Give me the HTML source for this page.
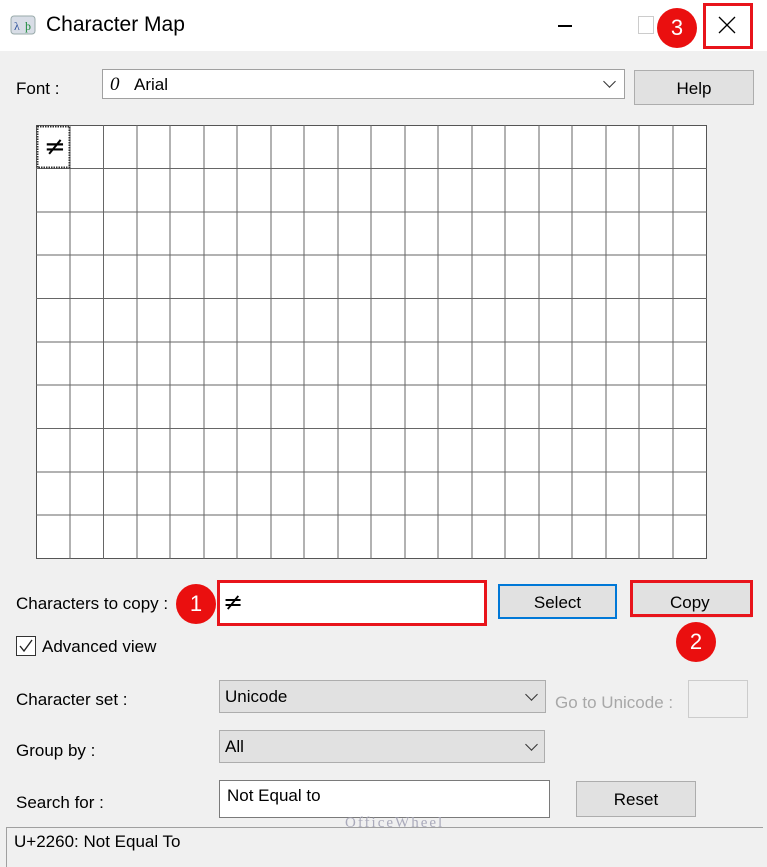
<!DOCTYPE html>
<html><head><style>
body{margin:0;width:767px;height:865px;background:#f0f0f0;font-family:"Liberation Sans",sans-serif;position:relative;overflow:hidden;color:#000}
.a{position:absolute}
.t{font-size:17px}
.btn{position:absolute;background:#e1e1e1;border:1px solid #adadad;box-sizing:border-box;text-align:center;font-size:17px}
.red{position:absolute;border:3px solid #e8141b;box-sizing:border-box}
.circ{position:absolute;width:40px;height:40px;border-radius:50%;background:#ea0f0f;color:#fff;font-size:22px;text-align:center;line-height:40px}
.chev{position:absolute;width:8px;height:8px;border-right:1.3px solid #333;border-bottom:1.3px solid #333;transform:rotate(45deg)}
</style></head><body>
<div class="a" style="left:0;top:0;width:767px;height:51px;background:#fff"></div>
<svg class="a" style="left:10px;top:14px" width="28" height="22"><rect x="1" y="2" width="24" height="18" rx="3" fill="#d8dde6" stroke="#9aa"/><text x="4" y="16" font-size="12" fill="#2a4f9a" font-family="Liberation Serif">λ</text><text x="15" y="16" font-size="12" fill="#1c8a3a" font-family="Liberation Serif">þ</text></svg>
<div class="a" style="left:46px;top:13px;font-size:21px">Character Map</div>
<div class="a" style="left:558px;top:25px;width:14px;height:1.5px;background:#000"></div>
<div class="a" style="left:638px;top:16px;width:14px;height:16px;border:1px solid #ccc"></div>
<div class="circ" style="left:657px;top:8px">3</div>
<div class="red" style="left:703px;top:3px;width:50px;height:46px"></div>
<svg class="a" style="left:717px;top:15px" width="20" height="20"><path d="M2 2L18 18M18 2L2 18" stroke="#000" stroke-width="1.3"/></svg>

<div class="a t" style="left:16px;top:79px">Font :</div>
<div class="a" style="left:102px;top:69px;width:523px;height:30px;background:#fff;border:1px solid #a0a0a0;box-sizing:border-box"></div>
<div class="a" style="left:110px;top:74px;font-family:'Liberation Serif';font-style:italic;font-size:19px">0</div>
<div class="a t" style="left:134px;top:75px">Arial</div>
<div class="chev" style="left:605px;top:77px"></div>
<div class="btn" style="left:634px;top:70px;width:120px;height:35px;line-height:35px">Help</div>

<svg class="a" style="left:36px;top:125px" width="671" height="434">
<rect x="0.5" y="0.5" width="670" height="433" fill="#fff" stroke="#555"/>
<g stroke="#666" stroke-width="1">
<path d="M34 0V434M67.5 0V434M101 0V434M134 0V434M168 0V434M201 0V434M235 0V434M268 0V434M302 0V434M335 0V434M369 0V434M402 0V434M436 0V434M469 0V434M503 0V434M536 0V434M570 0V434M603 0V434M637 0V434"/>
<path d="M0 43.5H671M0 87H671M0 130H671M0 173.5H671M0 217H671M0 260H671M0 303.5H671M0 347H671M0 390H671"/>
</g>
<rect x="1.5" y="1.5" width="32" height="41" fill="none" stroke="#333" stroke-width="2" stroke-dasharray="1.5 1"/>
<text x="8" y="30" font-size="26" font-family="DejaVu Sans">≠</text>
</svg>

<div class="a t" style="left:16px;top:594px">Characters to copy :</div>
<div class="a" style="left:219px;top:583px;width:266px;height:42px;background:#fff"></div>
<div class="red" style="left:217px;top:580px;width:270px;height:46px"></div>
<div class="circ" style="left:176px;top:584px">1</div>
<div class="a" style="left:223px;top:588px;font-size:24px;font-family:'DejaVu Sans'">≠</div>
<div class="btn" style="left:498px;top:584px;width:119px;height:35px;line-height:33px;border:2px solid #0078d7">Select</div>
<div class="btn" style="left:630px;top:583px;width:122px;height:35px;line-height:37px;border:none"></div>
<div class="red" style="left:630px;top:580px;width:123px;height:37px"></div>
<div class="a t" style="left:670px;top:593px">Copy</div>
<div class="circ" style="left:676px;top:622px">2</div>

<div class="a" style="left:16px;top:636px;width:18px;height:18px;border:1px solid #333;background:#fff"></div>
<svg class="a" style="left:17px;top:637px" width="18" height="18"><path d="M3 9L7 14L15 3" stroke="#222" stroke-width="1.4" fill="none"/></svg>
<div class="a t" style="left:42px;top:637px">Advanced view</div>

<div class="a t" style="left:16px;top:690px">Character set :</div>
<div class="a" style="left:219px;top:680px;width:327px;height:33px;background:#e1e1e1;border:1px solid #adadad;box-sizing:border-box"></div>
<div class="a t" style="left:225px;top:687px">Unicode</div>
<div class="chev" style="left:527px;top:690px"></div>
<div class="a t" style="left:555px;top:693px;color:#a8a8a8">Go to Unicode :</div>
<div class="a" style="left:688px;top:680px;width:60px;height:38px;border:1px solid #ccc;background:#f0f0f0;box-sizing:border-box"></div>

<div class="a t" style="left:16px;top:741px">Group by :</div>
<div class="a" style="left:219px;top:730px;width:326px;height:33px;background:#e1e1e1;border:1px solid #adadad;box-sizing:border-box"></div>
<div class="a t" style="left:225px;top:737px">All</div>
<div class="chev" style="left:527px;top:740px"></div>

<div class="a t" style="left:16px;top:793px">Search for :</div>
<div class="a" style="left:219px;top:780px;width:331px;height:38px;background:#fff;border:1px solid #7a7a7a;box-sizing:border-box"></div>
<div class="a t" style="left:227px;top:786px">Not Equal to</div>
<div class="btn" style="left:576px;top:781px;width:120px;height:36px;line-height:36px">Reset</div>

<div class="a" style="left:6px;top:827px;width:757px;height:40px;border-top:1px solid #a0a0a0;border-left:1px solid #a0a0a0;box-sizing:border-box"></div>
<div class="a t" style="left:14px;top:832px">U+2260: Not Equal To</div>
<div class="a" style="left:345px;top:815px;font-family:'Liberation Serif';font-size:15px;color:#aab;letter-spacing:2px">OfficeWheel</div>
</body></html>
